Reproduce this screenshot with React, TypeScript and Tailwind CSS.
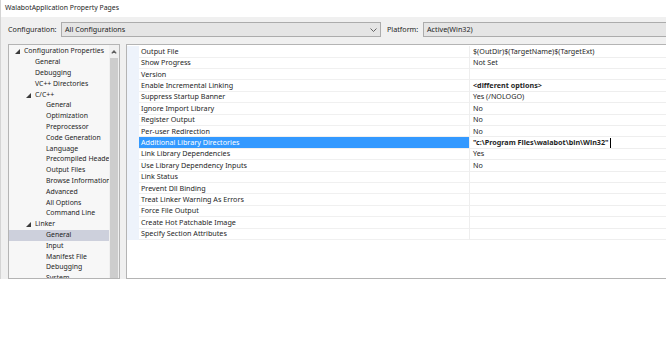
import React from "react"

type TreeItem = { label: string; level: 0 | 1 | 2; expander?: boolean; selected?: boolean }

const treeItems: TreeItem[] = [
  { label: "Configuration Properties", level: 0, expander: true },
  { label: "General", level: 1 },
  { label: "Debugging", level: 1 },
  { label: "VC++ Directories", level: 1 },
  { label: "C/C++", level: 1, expander: true },
  { label: "General", level: 2 },
  { label: "Optimization", level: 2 },
  { label: "Preprocessor", level: 2 },
  { label: "Code Generation", level: 2 },
  { label: "Language", level: 2 },
  { label: "Precompiled Headers", level: 2 },
  { label: "Output Files", level: 2 },
  { label: "Browse Information", level: 2 },
  { label: "Advanced", level: 2 },
  { label: "All Options", level: 2 },
  { label: "Command Line", level: 2 },
  { label: "Linker", level: 1, expander: true },
  { label: "General", level: 2, selected: true },
  { label: "Input", level: 2 },
  { label: "Manifest File", level: 2 },
  { label: "Debugging", level: 2 },
  { label: "System", level: 2 },
]

const indent = ["pl-[4px]", "pl-[15px]", "pl-[26px]"]

type Prop = { name: string; value?: string; bold?: boolean; selected?: boolean }

const props: Prop[] = [
  { name: "Output File", value: "$(OutDir)$(TargetName)$(TargetExt)" },
  { name: "Show Progress", value: "Not Set" },
  { name: "Version" },
  { name: "Enable Incremental Linking", value: "<different options>", bold: true },
  { name: "Suppress Startup Banner", value: "Yes (/NOLOGO)" },
  { name: "Ignore Import Library", value: "No" },
  { name: "Register Output", value: "No" },
  { name: "Per-user Redirection", value: "No" },
  { name: "Additional Library Directories", value: "\"c:\\Program Files\\walabot\\bin\\Win32\"", bold: true, selected: true },
  { name: "Link Library Dependencies", value: "Yes" },
  { name: "Use Library Dependency Inputs", value: "No" },
  { name: "Link Status" },
  { name: "Prevent Dll Binding" },
  { name: "Treat Linker Warning As Errors" },
  { name: "Force File Output" },
  { name: "Create Hot Patchable Image" },
  { name: "Specify Section Attributes" },
]

function Expander() {
  return (
    <svg width="5" height="5" viewBox="0 0 5 5" className="ml-[2px]">
      <polygon points="5,0 5,5 0,5" fill="#3c3c3c" />
    </svg>
  )
}

export default function App() {
  return (
    <div
      className="w-[666px] h-[361px] bg-white overflow-hidden text-[7.2px] text-[#1e1e1e] leading-none"
      style={{ fontFamily: '"Noto Sans", "Open Sans", sans-serif' }}
    >
      <div className="h-[279px] flex flex-col bg-[#f0f0f0] border-l border-[#d4d4d4]">
        {/* title bar */}
        <div className="h-[17px] bg-white flex items-center pl-[4px] text-[6.9px]">
          WalabotApplication Property Pages
        </div>

        {/* configuration / platform */}
        <div className="h-[27px] flex items-center pl-[7px] pb-[2px]">
          <span className="w-[53px]">Configuration:</span>
          <div className="w-[320px] h-[15px] bg-[#e5e5e5] border border-[#acacac] flex items-center pl-[3px] pr-[3px]">
            <span className="flex-1">All Configurations</span>
            <svg width="7" height="4" viewBox="0 0 7 4">
              <polyline points="0.5,0.5 3.5,3.5 6.5,0.5" fill="none" stroke="#555" strokeWidth="0.9" />
            </svg>
          </div>
          <span className="ml-[6px] w-[36px]">Platform:</span>
          <div className="flex-1 -mr-[4px] h-[15px] bg-[#e5e5e5] border border-[#acacac] flex items-center pl-[3px]">
            Active(Win32)
          </div>
        </div>

        <div className="flex-1 flex pl-[7px] min-h-0">
          {/* tree */}
          <div className="w-[112px] border border-[#b4b4b4] bg-[#f7f7f7] flex min-h-0 overflow-hidden text-[6.9px]">
            <div className="flex-1 min-w-0 pt-[1.5px] overflow-hidden">
              {treeItems.map((t, i) => (
                <div
                  key={i}
                  className={
                    "h-[10.8px] flex items-center whitespace-nowrap " +
                    indent[t.level] +
                    (t.selected ? " bg-[#cdd0dc]" : "")
                  }
                >
                  <span className="w-[11px] shrink-0 flex items-center">{t.expander && <Expander />}</span>
                  <span className="shrink-0">{t.label}</span>
                </div>
              ))}
            </div>
            <div className="w-[10px] shrink-0 bg-[#f0f0f0] flex flex-col">
              <div className="h-[13px] flex items-center justify-center">
                <svg width="6" height="4" viewBox="0 0 6 4">
                  <polyline points="0.8,3.4 3,1 5.2,3.4" fill="none" stroke="#606060" strokeWidth="1.4" />
                </svg>
              </div>
              <div className="flex-1 mx-[1px] bg-[#cdcdcd]" />
            </div>
          </div>

          {/* property grid */}
          <div className="flex-1 ml-[6px] border border-r-0 border-[#b4b4b4] bg-white pt-[1.3px] -mr-[2px]">
            {props.map((p, i) => (
              <div key={i} className="h-[11.4px] flex whitespace-nowrap">
                <div className="w-[12px] bg-[#eef3fb]" />
                <div
                  className={
                    "w-[330px] flex items-center pl-[2px] border-b border-[#f0f0f0] " +
                    (p.selected ? "bg-[#3399ff] text-white border-[#3399ff]" : "")
                  }
                >
                  {p.name}
                </div>
                <div
                  className={
                    "flex-1 flex items-center pl-[3px] border-l border-b border-[#eeeeee] " +
                    (p.bold ? "font-bold" : "")
                  }
                >
                  {p.value}
                  {p.selected && <span className="ml-[1px] w-[1px] h-[10px] bg-black" />}
                </div>
              </div>
            ))}
          </div>
        </div>
      </div>
    </div>
  )
}
